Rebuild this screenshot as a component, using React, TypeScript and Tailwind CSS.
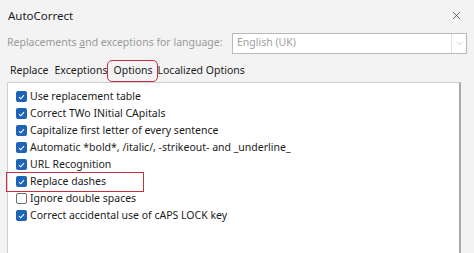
import { X, ChevronDown } from 'lucide-react';

const options = [
  { label: 'Use replacement table', checked: true },
  { label: 'Correct TWo INitial CApitals', checked: true },
  { label: 'Capitalize first letter of every sentence', checked: true },
  { label: 'Automatic *bold*, /italic/, -strikeout- and _underline_', checked: true },
  { label: 'URL Recognition', checked: true },
  { label: 'Replace dashes', checked: true, marked: true },
  { label: 'Ignore double spaces', checked: false },
  { label: 'Correct accidental use of cAPS LOCK key', checked: true },
];

function Checkbox({ checked }: { checked: boolean }) {
  if (!checked) {
    return <span className="w-[11px] h-[11px] shrink-0 rounded-[2px] border border-[#6b6b6b] bg-white" />;
  }
  return (
    <span className="w-[11px] h-[11px] shrink-0 rounded-[2px] bg-[#1d63b8] flex items-center justify-center">
      <svg width="7" height="6" viewBox="0 0 7 6" fill="none">
        <path d="M1 3.2 L2.8 4.8 L6 1.2" stroke="white" strokeWidth="1.1" />
      </svg>
    </span>
  );
}

export default function App() {
  return (
    <div
      className="w-[474px] h-[253px] overflow-hidden bg-[#f3f3f3] text-[#1b1b1b] text-[10.5px] relative"
      style={{ fontFamily: '"Noto Sans", "Open Sans", sans-serif' }}
    >
      <div className="flex items-center justify-between h-[30px] pl-[8px] pr-[11px]">
        <span className="text-[11.5px] mt-[1px]">AutoCorrect</span>
        <X className="w-[13px] h-[13px] text-[#333]" strokeWidth={1.3} />
      </div>

      <div className="flex items-center justify-between pl-[7px] pr-[7px] h-[22px] mt-[2px]">
        <span className="text-[#9a9a9a] whitespace-nowrap">
          Replacements <span className="underline">a</span>nd exceptions for language:
        </span>
        <div className="w-[235px] h-[21px] shrink-0 border border-[#b9b9b9] bg-white flex items-center justify-between">
          <span className="pl-[4px] text-[#a0a0a0]">English (UK)</span>
          <span className="h-full w-[15px] border-l border-[#e2e2e2] flex items-center justify-center">
            <ChevronDown className="w-[9px] h-[9px] text-[#b0b0b0]" strokeWidth={1.5} />
          </span>
        </div>
      </div>

      <div className="flex items-center h-[24px] mt-[5px] pl-[10px] gap-[6px] whitespace-nowrap">
        <span>Replace</span>
        <span>Exceptions</span>
        <span className="relative px-[5px] -mx-[5px]">
          Options
          <span className="absolute left-[-1px] right-[0px] top-[-3px] bottom-[-3px] border-[1.5px] border-[#c62f3d] rounded-[5px]" />
        </span>
        <span className="-ml-[1px]">Localized Options</span>
      </div>

      <div className="-mt-[1px] ml-[7px] w-[454px] h-[180px] bg-white border border-[#cfcfcf] border-r-[#a9a9a9] border-r-2 pt-[5px] pl-[8px] flex flex-col">
        {options.map((o) => (
          <div key={o.label} className="relative flex items-center gap-[3px] h-[17px]">
            <Checkbox checked={o.checked} />
            <span className="whitespace-nowrap">{o.label}</span>
            {o.marked && (
              <span className="absolute left-[-10px] top-[-1px] w-[138px] h-[20px] border-[1.5px] border-[#c62f3d]" />
            )}
          </div>
        ))}
      </div>
    </div>
  );
}
